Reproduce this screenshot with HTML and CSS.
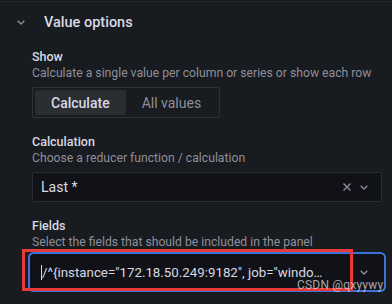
FILE: index.html
```html
<!DOCTYPE html>
<html>
<head>
<meta charset="utf-8">
<link rel="stylesheet" href="styles.css">
</head>
<body>
<div class="panel">
  <div class="section-header">
    <svg class="hdr-chev" width="8" height="5" viewBox="0 0 8 5"><path d="M0.7 0.7 L4 4 L7.3 0.7" fill="none" stroke="#8e8e99" stroke-width="1.3"/></svg>
    <span class="section-title">Value options</span>
  </div>
  <div class="fields">
    <div class="field">
      <div class="label">Show</div>
      <div class="desc">Calculate a single value per column or series or show each row</div>
      <div class="radio-group">
        <span class="radio active">Calculate</span>
        <span class="radio">All values</span>
      </div>
    </div>
    <div class="field">
      <div class="label">Calculation</div>
      <div class="desc">Choose a reducer function / calculation</div>
      <div class="select">
        <span class="value">Last *</span>
        <svg class="clear" width="8" height="8" viewBox="0 0 8 8"><path d="M0.5 0.5 L7.5 7.5 M7.5 0.5 L0.5 7.5" stroke="#8e8e99" stroke-width="1.4"/></svg>
        <svg class="chev" width="8" height="5" viewBox="0 0 8 5"><path d="M0.7 0.7 L4 4 L7.3 0.7" fill="none" stroke="#8e8e99" stroke-width="1.3"/></svg>
      </div>
    </div>
    <div class="field">
      <div class="label">Fields</div>
      <div class="desc">Select the fields that should be included in the panel</div>
      <div class="select focused">
        <span class="caret"></span>
        <span class="value fields-value">/^{instance="172.18.50.249:9182", job="windo…</span>
        <svg class="chev" width="8" height="5" viewBox="0 0 8 5"><path d="M0.7 0.7 L4 4 L7.3 0.7" fill="none" stroke="#8e8e99" stroke-width="1.3"/></svg>
      </div>
    </div>
  </div>
</div>
<div class="annot"></div>
<div class="watermark">CSDN @qxyywy</div>
</body>
</html>
```
FILE: styles.css
```css
html, body {
  margin: 0;
  padding: 0;
}
body {
  width: 392px;
  height: 304px;
  overflow: hidden;
  position: relative;
  background: #181b1f;
  font-family: Roboto, "Liberation Sans", sans-serif;
  color: #ccccdc;
}
.panel {
  margin-top: 1px;
  border-top: 1px solid #24272c;
}
.section-header {
  height: 40px;
  display: flex;
  align-items: center;
  padding-left: 17px;
}
.hdr-chev {
  display: block;
}
.section-title {
  margin-left: 19px;
  font-size: 14.5px;
  font-weight: 500;
  color: #d8d9e4;
}
.fields {
  padding: 6px 10px 0 32px;
  display: flex;
  flex-direction: column;
  gap: 15px;
}
.field {
  display: flex;
  flex-direction: column;
  align-items: flex-start;
}
.label {
  font-size: 12.5px;
  font-weight: 500;
  line-height: 17px;
  color: #d8d9e4;
}
.desc {
  font-size: 12.2px;
  line-height: 17px;
  color: #8e8f9a;
  white-space: nowrap;
}
.radio-group {
  margin-top: 5px;
  display: flex;
  height: 31px;
  box-sizing: border-box;
  padding: 2px;
  border: 1px solid #2f3136;
  border-radius: 2px;
}
.radio {
  height: 25px;
  display: flex;
  align-items: center;
  padding: 0 16px;
  font-size: 14px;
  color: #8e8f9a;
  border-radius: 2px;
}
.radio.active {
  background: #2a2d32;
  color: #d8d9e4;
  font-weight: 500;
}
.select {
  margin-top: 5px;
  align-self: stretch;
  height: 30px;
  box-sizing: border-box;
  display: flex;
  align-items: center;
  background: #111217;
  border: 1px solid #2a2c31;
  border-radius: 2px;
  padding: 0 13px 0 8px;
}
.select .value {
  flex: 1;
  font-size: 14px;
  color: #d8d9e4;
  white-space: nowrap;
  overflow: hidden;
}
.select .fields-value {
  font-size: 13.3px;
}
.clear {
  display: block;
  margin-right: 9px;
}
.chev {
  display: block;
}
.select.focused {
  margin-top: 5px;
  height: 32px;
  border-color: #111217;
  box-shadow: 0 0 0 2px #111217, 0 0 0 4px #3d71d9;
  border-radius: 2px;
}
.caret {
  width: 1px;
  height: 15px;
  background: #d8d9e4;
  margin-right: 0;
}
.annot {
  position: absolute;
  left: 22px;
  top: 249px;
  width: 325px;
  height: 36px;
  border: 3px solid #e93a3a;
}
.watermark {
  position: absolute;
  left: 297px;
  top: 278px;
  font-size: 12px;
  line-height: 14px;
  color: rgba(225, 225, 230, 0.72);
  letter-spacing: 0.2px;
}
```
